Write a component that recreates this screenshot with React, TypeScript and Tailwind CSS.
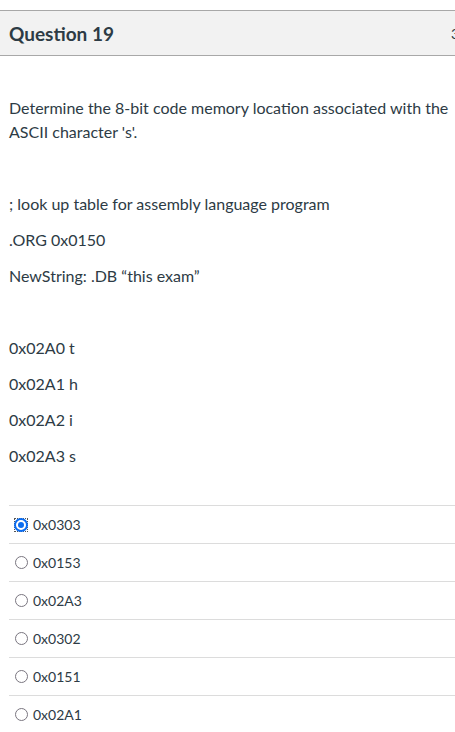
import React from "react";

function Radio({ checked }: { checked?: boolean }) {
  if (checked) {
    return (
      <span className="relative flex h-[14px] w-[14px] shrink-0 items-center justify-center">
        <span className="absolute inset-0 border border-dotted border-[#555]" />
        <span className="relative flex h-[14px] w-[14px] items-center justify-center rounded-full border-2 border-[#0b6cf0] bg-white">
          <span className="h-[6px] w-[6px] rounded-full bg-[#0b6cf0]" />
        </span>
      </span>
    );
  }
  return (
    <span className="flex h-[14px] w-[14px] shrink-0 items-center justify-center">
      <span className="h-[13px] w-[13px] rounded-full border-[1.5px] border-[#7a7680] bg-white" />
    </span>
  );
}

const answers = ["0x0303", "0x0153", "0x02A3", "0x0302", "0x0151", "0x02A1"];

export default function App() {
  const para = "m-0 mb-[12px] min-h-[24px] leading-[24px]";
  return (
    <div className="min-h-screen w-full overflow-hidden bg-white text-[#2d3b45]" style={{ fontFamily: "Lato, 'Noto Sans', sans-serif" }}>
      <div className="mt-[10px] flex h-[46px] items-center border-y border-[#a8a8a8] bg-[#f2f2f2] pl-[9px]">
        <h2 className="m-0 text-[19px] font-bold leading-none">Question 19</h2>
        <div className="ml-auto w-[4px] shrink-0 overflow-visible whitespace-nowrap text-[14px] text-[#2d3b45]">
          <span>3 pts</span>
        </div>
      </div>
      <div className="pl-[9px] pr-[2px] pt-[40px] text-[16px]">
        <p className={para}>Determine the 8-bit code memory location associated with the ASCII character 's'.</p>
        <p className={para}></p>
        <p className={para}>; look up table for assembly language program</p>
        <p className={para}>.ORG 0x0150</p>
        <p className={para}>NewString: .DB  “this exam”</p>
        <p className={para}></p>
        <p className={para}>0x02A0 t</p>
        <p className={para}>0x02A1 h</p>
        <p className={para}>0x02A2 i</p>
        <p className={para}>0x02A3 s</p>
      </div>
      <div className="ml-[9px] mt-[37px]">
        {answers.map((a, i) => (
          <div key={a} className="flex h-[38px] items-center gap-[5px] border-t border-[#dcdcdc] pl-[5px]">
            <Radio checked={i === 0} />
            <span className="text-[14px] text-[#2d3b45]">{a}</span>
          </div>
        ))}
      </div>
    </div>
  );
}
